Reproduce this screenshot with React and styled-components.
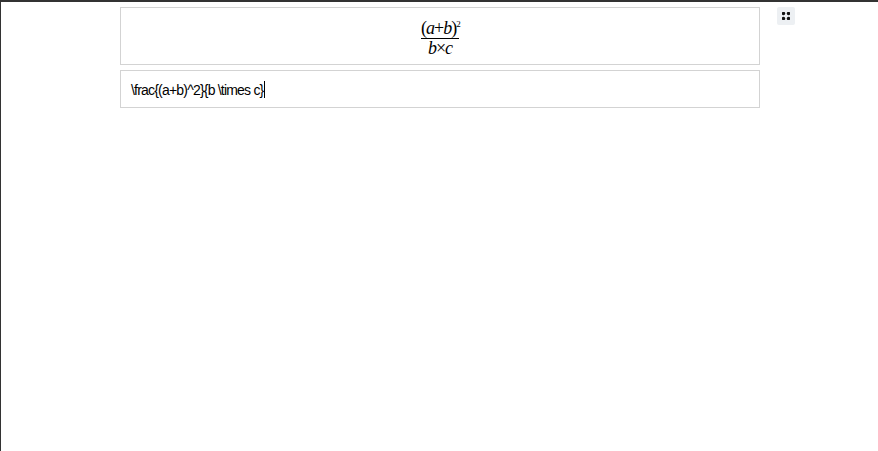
import styled, { createGlobalStyle } from "styled-components";

const GlobalStyle = createGlobalStyle`
  html, body {
    margin: 0;
    padding: 0;
    background: #fff;
  }
`;

const Page = styled.div`
  box-sizing: border-box;
  height: 451px;
  padding: 5px 0 0 119px;
  display: flex;
  align-items: flex-start;
  column-gap: 17px;
  border-top: 2px solid #333;
  border-left: 1px solid #333;
  overflow: hidden;
`;

const Editor = styled.div`
  width: 640px;
  display: flex;
  flex-direction: column;
  row-gap: 5px;
`;

const Preview = styled.div`
  box-sizing: border-box;
  height: 58px;
  display: flex;
  align-items: center;
  justify-content: center;
  border: 1px solid #d3d3d3;
`;

const Fraction = styled.div`
  display: inline-flex;
  flex-direction: column;
  align-items: center;
  font-family: "Liberation Serif", serif;
  font-size: 18px;
  letter-spacing: -1px;
  color: #000;
`;

const Numerator = styled.div`
  width: 38px;
  height: 20px;
  line-height: 21px;
  text-align: center;
  border-bottom: 1px solid #000;
  white-space: nowrap;
`;

const Denominator = styled.div`
  height: 15px;
  line-height: 19px;
  white-space: nowrap;
`;

const Var = styled.i`
  font-style: italic;
`;

const Sup = styled.sup`
  font-size: 9px;
  letter-spacing: 0;
  line-height: 0;
  vertical-align: 7px;
`;

const Source = styled.div`
  box-sizing: border-box;
  height: 38px;
  padding: 1px 10px 0;
  display: flex;
  align-items: center;
  border: 1px solid #d3d3d3;
  font-family: "Liberation Sans", Arial, sans-serif;
  font-size: 14px;
  letter-spacing: -0.8px;
  color: #000;
`;

const Caret = styled.span`
  width: 1px;
  height: 17px;
  margin-left: 1px;
  background: #000;
`;

const Handle = styled.button`
  width: 18px;
  height: 18px;
  padding: 0;
  border: 0;
  border-radius: 2px;
  display: flex;
  align-items: center;
  justify-content: center;
  background: #edf0f3;
`;

const App = () => (
  <>
    <GlobalStyle />
    <Page>
      <Editor>
        <Preview>
          <Fraction>
            <Numerator>
              (<Var>a</Var>+<Var>b</Var>)<Sup>2</Sup>
            </Numerator>
            <Denominator>
              <Var>b</Var>×<Var>c</Var>
            </Denominator>
          </Fraction>
        </Preview>
        <Source>
          {"\\frac{(a+b)^2}{b \\times c}"}
          <Caret />
        </Source>
      </Editor>
      <Handle aria-label="drag">
        <svg width="8" height="8" viewBox="0 0 8 8">
          <circle cx="1.5" cy="1.5" r="1.7" fill="#111" />
          <circle cx="6.5" cy="1.5" r="1.7" fill="#111" />
          <circle cx="1.5" cy="6.5" r="1.7" fill="#111" />
          <circle cx="6.5" cy="6.5" r="1.7" fill="#111" />
        </svg>
      </Handle>
    </Page>
  </>
);

export default App;
